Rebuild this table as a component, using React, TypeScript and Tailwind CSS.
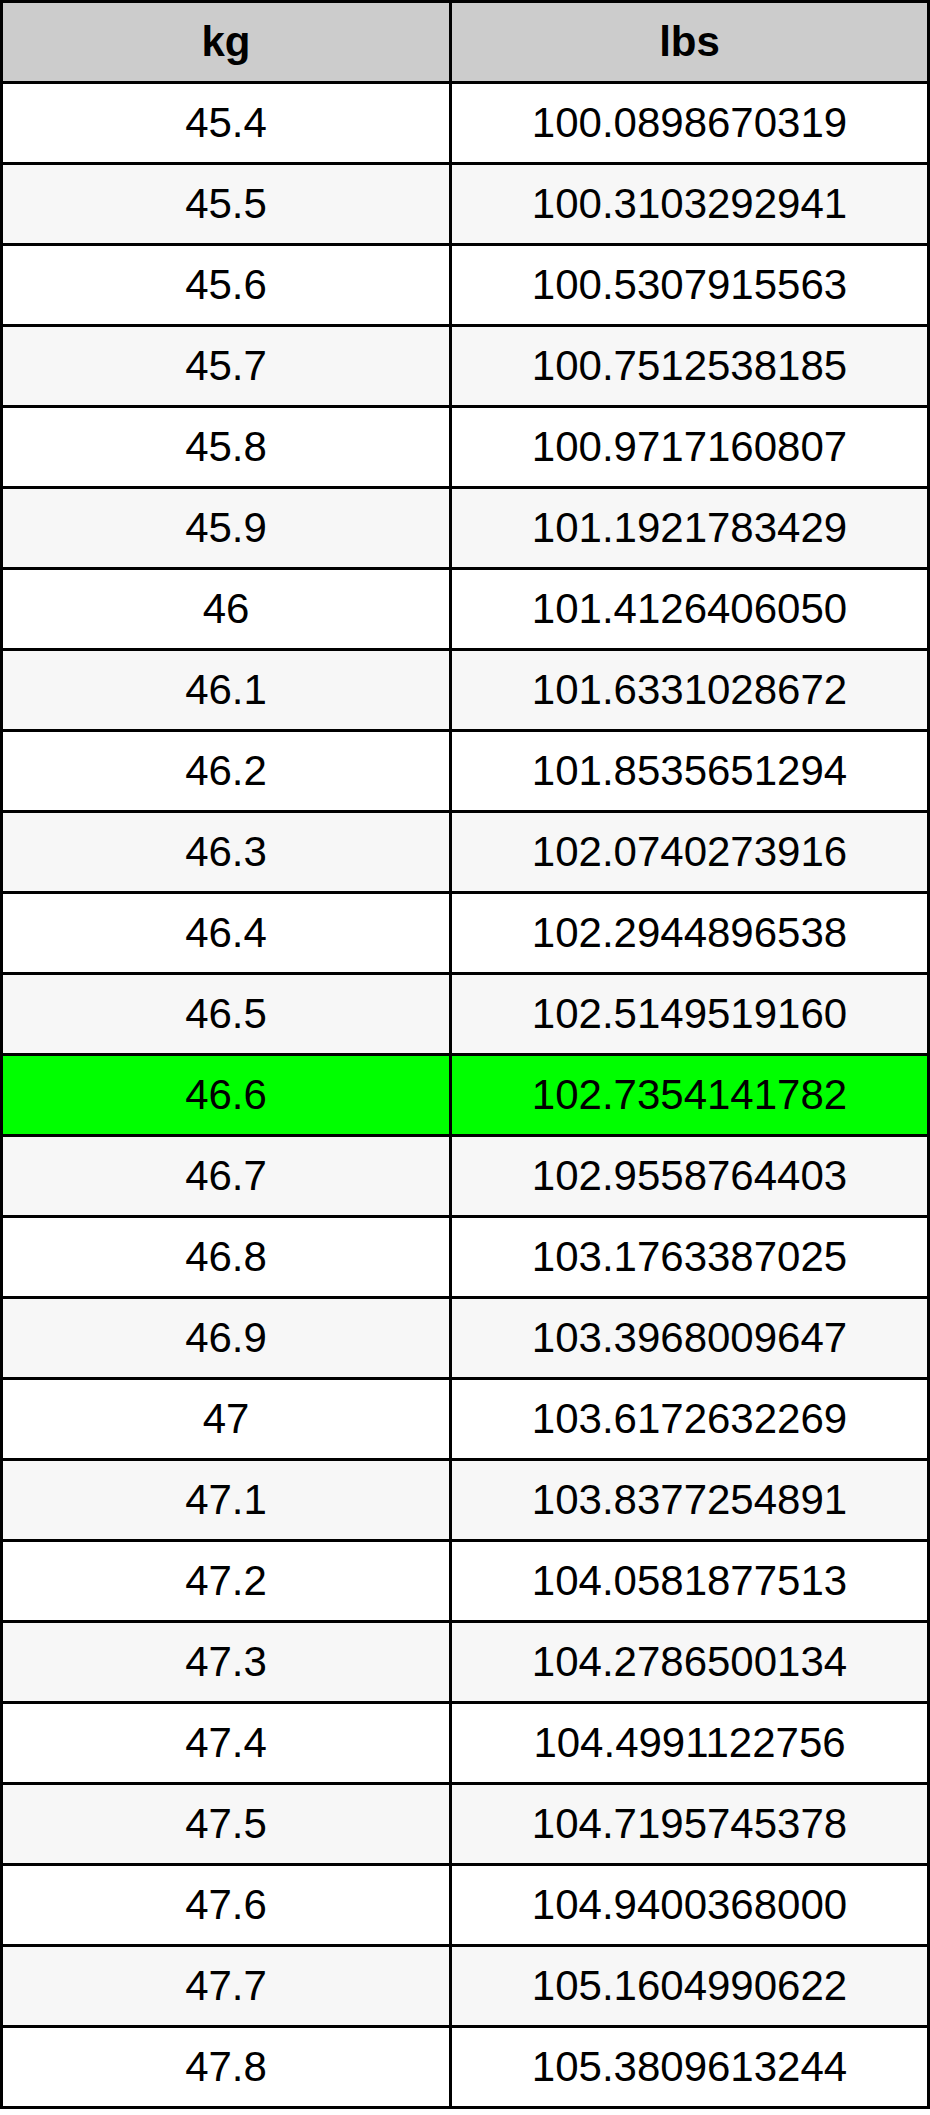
const rows: [string, string][] = [
  ["45.4", "100.0898670319"],
  ["45.5", "100.3103292941"],
  ["45.6", "100.5307915563"],
  ["45.7", "100.7512538185"],
  ["45.8", "100.9717160807"],
  ["45.9", "101.1921783429"],
  ["46", "101.4126406050"],
  ["46.1", "101.6331028672"],
  ["46.2", "101.8535651294"],
  ["46.3", "102.0740273916"],
  ["46.4", "102.2944896538"],
  ["46.5", "102.5149519160"],
  ["46.6", "102.7354141782"],
  ["46.7", "102.9558764403"],
  ["46.8", "103.1763387025"],
  ["46.9", "103.3968009647"],
  ["47", "103.6172632269"],
  ["47.1", "103.8377254891"],
  ["47.2", "104.0581877513"],
  ["47.3", "104.2786500134"],
  ["47.4", "104.4991122756"],
  ["47.5", "104.7195745378"],
  ["47.6", "104.9400368000"],
  ["47.7", "105.1604990622"],
  ["47.8", "105.3809613244"],
];

const HIGHLIGHT = "46.6";

export default function App() {
  return (
    <div className="w-[930px] bg-white font-['Liberation_Sans',Arial,sans-serif] text-[42px] leading-none text-black">
      <div className="border-[3px] border-black">
        <div className="flex h-[78px] bg-[#cccccc] font-bold">
          <div className="flex w-[446px] items-center justify-center">kg</div>
          <div className="flex flex-1 items-center justify-center border-l-[3px] border-black">lbs</div>
        </div>
        {rows.map(([kg, lbs], i) => {
          const bg =
            kg === HIGHLIGHT ? "bg-[#00ff00]" : i % 2 === 1 ? "bg-[#f7f7f7]" : "bg-white";
          return (
            <div key={kg} className={`flex h-[81px] border-t-[3px] border-black ${bg}`}>
              <div className="flex w-[446px] items-center justify-center">{kg}</div>
              <div className="flex flex-1 items-center justify-center border-l-[3px] border-black">
                {lbs}
              </div>
            </div>
          );
        })}
      </div>
    </div>
  );
}
